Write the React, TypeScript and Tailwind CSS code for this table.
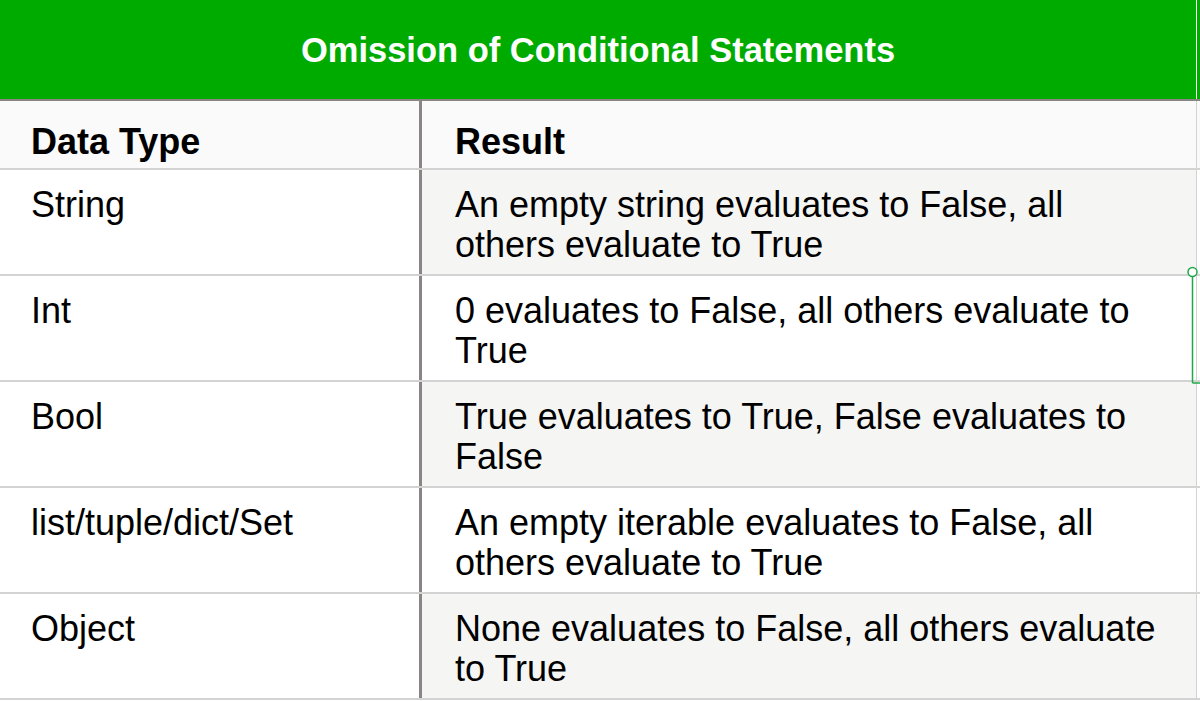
import React from "react";

const rows = [
  { type: "String", result: ["An empty string evaluates to False, all", "others evaluate to True"] },
  { type: "Int", result: ["0 evaluates to False, all others evaluate to", "True"] },
  { type: "Bool", result: ["True evaluates to True, False evaluates to", "False"] },
  { type: "list/tuple/dict/Set", result: ["An empty iterable evaluates to False, all", "others evaluate to True"] },
  { type: "Object", result: ["None evaluates to False, all others evaluate", "to True"] },
];

function App() {
  return (
    <div
      className="relative w-[1200px] h-[701px] overflow-hidden bg-white text-black"
      style={{ fontFamily: '"Liberation Sans", Arial, Helvetica, sans-serif' }}
    >
      {/* 표 제목 */}
      <div className="flex h-[99px]">
        <div className="flex w-[1196px] items-center justify-center bg-[#00ab00] pt-[3px]">
          <span className="text-[34.5px] font-bold text-white whitespace-nowrap">Omission of Conditional Statements</span>
        </div>
        <div className="w-px bg-white" />
        <div className="flex-1 bg-[#00ab00]" />
      </div>
      <div className="h-[2px] bg-[#8a8584]" />

      {/* 헤더 행 */}
      <div className="grid h-[69px] grid-cols-[419px_3px_774px_1px_3px] border-b-2 border-[#d3d3d3] bg-[#fafafa]">
        <div className="pl-[31px] pt-[21px] text-[36px] font-bold leading-[40px] whitespace-nowrap">Data Type</div>
        <div className="bg-[#8a8584]" />
        <div className="pl-[33px] pt-[21px] text-[36px] font-bold leading-[40px]">Result</div>
        <div className="bg-[#d3d3d3]" />
        <div />
      </div>

      {/* 데이터 행 */}
      {rows.map((r, i) => (
        <div
          key={r.type}
          className="grid h-[106px] grid-cols-[419px_3px_774px_1px_3px] border-b-2 border-[#d3d3d3]"
        >
          <div className="bg-white pl-[31px] pt-[15px] text-[36px] leading-[40px] whitespace-nowrap">{r.type}</div>
          <div className="bg-[#8a8584]" />
          <div
            className={
              "pl-[33px] pt-[15px] text-[36px] leading-[40px] whitespace-nowrap " +
              (i % 2 === 0 ? "bg-[#f5f5f3]" : "bg-white")
            }
          >
            {r.result.map((line) => (
              <div key={line}>{line}</div>
            ))}
          </div>
          <div className="bg-[#d3d3d3]" />
          <div className="bg-white" />
        </div>
      ))}

      {/* 선택 핸들 */}
      <svg className="absolute left-[1185px] top-[264px]" width="15" height="122" viewBox="0 0 15 122">
        <line x1="7.5" y1="12" x2="7.5" y2="119" stroke="#1fa84a" strokeWidth="1.5" />
        <line x1="7.5" y1="119" x2="15" y2="119" stroke="#1fa84a" strokeWidth="1.5" />
        <circle cx="7.5" cy="8" r="4.5" fill="white" stroke="#1fa84a" strokeWidth="1.5" />
      </svg>
    </div>
  );
}

export default App;
